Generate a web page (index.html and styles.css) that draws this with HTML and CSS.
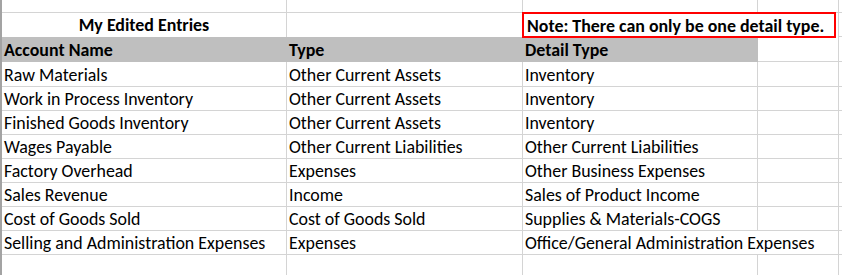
FILE: index.html
```html
<!DOCTYPE html>
<html>
<head>
<meta charset="utf-8">
<link rel="stylesheet" href="styles.css">
</head>
<body>
<div class="sheet">
  <div class="grid">
    <div class="c top"></div><div class="c top"></div><div class="c top"></div><div class="c top"></div><div class="c top"></div>

    <div class="c t title">My Edited Entries</div>
    <div class="c t"></div>
    <div class="c t span2"><div class="note">Note: There can only be one detail type.</div></div>
    <div class="c t tlast"></div>

    <div class="c h">Account Name</div>
    <div class="c h">Type</div>
    <div class="c h">Detail Type</div>
    <div class="c hx"></div>
    <div class="c hx"></div>

    <div class="c d first">Raw Materials</div><div class="c d first">Other Current Assets</div><div class="c d first">Inventory</div><div class="c d first"></div><div class="c d first"></div>
    <div class="c d">Work in Process Inventory</div><div class="c d">Other Current Assets</div><div class="c d">Inventory</div><div class="c d"></div><div class="c d"></div>
    <div class="c d">Finished Goods Inventory</div><div class="c d">Other Current Assets</div><div class="c d">Inventory</div><div class="c d"></div><div class="c d"></div>
    <div class="c d">Wages Payable</div><div class="c d">Other Current Liabilities</div><div class="c d">Other Current Liabilities</div><div class="c d"></div><div class="c d"></div>
    <div class="c d">Factory Overhead</div><div class="c d">Expenses</div><div class="c d">Other Business Expenses</div><div class="c d"></div><div class="c d"></div>
    <div class="c d">Sales Revenue</div><div class="c d">Income</div><div class="c d">Sales of Product Income</div><div class="c d"></div><div class="c d"></div>
    <div class="c d">Cost of Goods Sold</div><div class="c d">Cost of Goods Sold</div><div class="c d">Supplies &amp; Materials-COGS</div><div class="c d"></div><div class="c d"></div>
    <div class="c d">Selling and Administration Expenses</div><div class="c d">Expenses</div><div class="c d span2">Office/General Administration Expenses</div><div class="c d"></div>

    <div class="c end"></div><div class="c end"></div><div class="c end"></div><div class="c end"></div><div class="c end"></div>
  </div>
</div>
</body>
</html>
```
FILE: styles.css
```css
html, body {
  margin: 0;
  padding: 0;
  background: #ffffff;
}

body {
  font-family: Carlito, Calibri, "Liberation Sans", sans-serif;
  font-size: 17.9px;
  color: #000000;
}

.sheet {
  width: 842px;
  height: 275px;
  box-sizing: border-box;
  border-left: 2px solid #a3a3a3;
  overflow: hidden;
}

.grid {
  display: grid;
  grid-template-columns: 285px 236px 235px 81px 1fr;
  grid-template-rows: 13px 24px 25px 25px repeat(7, 24px) 1fr;
  height: 100%;
}

.c {
  box-sizing: border-box;
  border-right: 1px solid #d4d4d4;
  border-bottom: 1px solid #d4d4d4;
  padding: 0 2px;
  line-height: 25px;
  white-space: nowrap;
  min-width: 0;
}

.t {
  border-bottom: none;
  line-height: 24px;
}

.tlast {
  border-bottom: 1px solid #d4d4d4;
}

.title {
  font-weight: 700;
  text-align: center;
}

.span2 {
  grid-column: span 2;
}

.note {
  position: relative;
  z-index: 1;
  box-sizing: border-box;
  height: 26px;
  margin: -1px 0 0 -3px;
  border: 2px solid #ff0000;
  padding: 0 0 0 3px;
  font-weight: 700;
  line-height: 24px;
}

.h {
  background: #bfbfbf;
  border-right-color: #bfbfbf;
  border-bottom-color: #bfbfbf;
  font-weight: 700;
  line-height: 26px;
}

.first {
  padding-top: 1px;
}

.end {
  border-bottom: none;
}
```
